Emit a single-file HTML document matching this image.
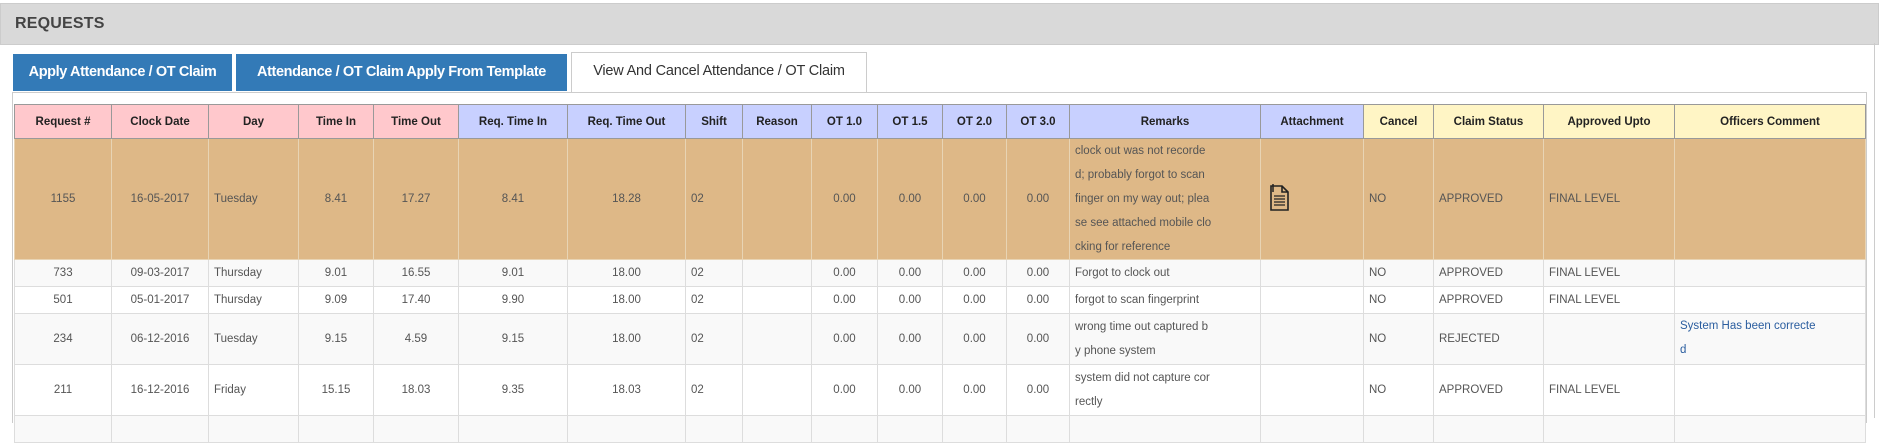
<!DOCTYPE html>
<html><head><meta charset="utf-8"><style>
body{margin:0;width:1879px;height:418px;overflow:hidden;background:#fff;font-family:"Liberation Sans",sans-serif;}
.hdr{position:absolute;left:0;top:3px;width:1877px;height:40px;background:#d9d9d9;border:1px solid #ccc;}
.hdr span{position:absolute;left:14px;top:11px;font-size:16px;font-weight:bold;color:#444;letter-spacing:0.2px}
.tab{position:absolute;top:54px;height:37px;line-height:37px;font-size:14.5px;color:#fff;background:#337ab7;white-space:nowrap;font-weight:bold;letter-spacing:-0.4px;text-align:center;overflow:hidden}
.tab3{background:#fff;color:#333;font-weight:normal;border:1px solid #ccc;border-bottom:none;height:39px;top:52px;letter-spacing:-0.2px}
.box{position:absolute;left:12px;top:92px;width:1853px;height:330px;border:1px solid #ccc;border-bottom:none}
.scroll{position:absolute;left:1874px;top:43px;width:1px;height:375px;background:#ccc}
table{position:absolute;left:14px;top:104px;border-collapse:collapse;table-layout:fixed;width:1851px;font-size:11.5px;color:#555}
th{height:31px;font-weight:bold;color:#222;border:1px solid #999;font-size:11.5px}
td{border:1px solid #ddd;padding:0 5px;}
.p{background:#ffc8cc}.b{background:#c8d0ff}.y{background:#fff5c5}
.c{text-align:center}
tr.r1 td{background:#deb887;height:119px;border-color:#e8d4b4}
tr.alt td{background:#f9f9f9}
</style></head><body>
<div class="hdr"><span>REQUESTS</span></div>
<div class="scroll"></div>
<div class="tab" style="left:13px;width:219px">Apply Attendance / OT Claim</div>
<div class="tab" style="left:236px;width:331px">Attendance / OT Claim Apply From Template</div>
<div class="tab tab3" style="left:571px;width:294px">View And Cancel Attendance / OT Claim</div>
<div class="box"></div>
<table>
<colgroup><col style="width:97px"><col style="width:97px"><col style="width:90px"><col style="width:75px"><col style="width:85px"><col style="width:109px"><col style="width:118px"><col style="width:57px"><col style="width:69px"><col style="width:66px"><col style="width:65px"><col style="width:64px"><col style="width:63px"><col style="width:191px"><col style="width:103px"><col style="width:70px"><col style="width:110px"><col style="width:131px"><col style="width:191px"></colgroup>
<tr><th class="p">Request #</th><th class="p">Clock Date</th><th class="p">Day</th><th class="p">Time In</th><th class="p">Time Out</th><th class="b">Req. Time In</th><th class="b">Req. Time Out</th><th class="b">Shift</th><th class="b">Reason</th><th class="b">OT 1.0</th><th class="b">OT 1.5</th><th class="b">OT 2.0</th><th class="b">OT 3.0</th><th class="b">Remarks</th><th class="b">Attachment</th><th class="y">Cancel</th><th class="y">Claim Status</th><th class="y">Approved Upto</th><th class="y">Officers Comment</th></tr>
<tr class="r1"><td class="c">1155</td><td class="c">16-05-2017</td><td>Tuesday</td><td class="c">8.41</td><td class="c">17.27</td><td class="c">8.41</td><td class="c">18.28</td><td>02</td><td></td><td class="c">0.00</td><td class="c">0.00</td><td class="c">0.00</td><td class="c">0.00</td><td style="line-height:24px">clock out was not recorde<br>d; probably forgot to scan<br>finger on my way out; plea<br>se see attached mobile clo<br>cking for reference</td><td><svg width="24" height="30" viewBox="0 0 24 30" style="margin-left:2px"><path d="M3 3h11l6 6v18H3z M14 3v6h6" fill="none" stroke="#222" stroke-width="1.6"/><path d="M6 13h11M6 16h11M6 19h11M6 22h11" stroke="#222" stroke-width="1.2"/><path d="M5 1v8" stroke="#222" stroke-width="1.5"/></svg></td><td>NO</td><td>APPROVED</td><td>FINAL LEVEL</td><td></td></tr>
<tr class="alt"><td class="c" style="height:26px">733</td><td class="c">09-03-2017</td><td>Thursday</td><td class="c">9.01</td><td class="c">16.55</td><td class="c">9.01</td><td class="c">18.00</td><td>02</td><td></td><td class="c">0.00</td><td class="c">0.00</td><td class="c">0.00</td><td class="c">0.00</td><td>Forgot to clock out</td><td></td><td>NO</td><td>APPROVED</td><td>FINAL LEVEL</td><td></td></tr>
<tr><td class="c" style="height:26px">501</td><td class="c">05-01-2017</td><td>Thursday</td><td class="c">9.09</td><td class="c">17.40</td><td class="c">9.90</td><td class="c">18.00</td><td>02</td><td></td><td class="c">0.00</td><td class="c">0.00</td><td class="c">0.00</td><td class="c">0.00</td><td>forgot to scan fingerprint</td><td></td><td>NO</td><td>APPROVED</td><td>FINAL LEVEL</td><td></td></tr>
<tr class="alt"><td class="c" style="height:50px">234</td><td class="c">06-12-2016</td><td>Tuesday</td><td class="c">9.15</td><td class="c">4.59</td><td class="c">9.15</td><td class="c">18.00</td><td>02</td><td></td><td class="c">0.00</td><td class="c">0.00</td><td class="c">0.00</td><td class="c">0.00</td><td style="line-height:24px">wrong time out captured b<br>y phone system</td><td></td><td>NO</td><td>REJECTED</td><td></td><td style="line-height:24px;vertical-align:top;color:#2a5d9f">System Has been correcte<br>d</td></tr>
<tr><td class="c" style="height:50px">211</td><td class="c">16-12-2016</td><td>Friday</td><td class="c">15.15</td><td class="c">18.03</td><td class="c">9.35</td><td class="c">18.03</td><td>02</td><td></td><td class="c">0.00</td><td class="c">0.00</td><td class="c">0.00</td><td class="c">0.00</td><td style="line-height:24px">system did not capture cor<br>rectly</td><td></td><td>NO</td><td>APPROVED</td><td>FINAL LEVEL</td><td></td></tr>
<tr class="alt"><td style="height:26px"></td><td></td><td></td><td></td><td></td><td></td><td></td><td></td><td></td><td></td><td></td><td></td><td></td><td></td><td></td><td></td><td></td><td></td><td></td></tr>
</table>
</body></html>
